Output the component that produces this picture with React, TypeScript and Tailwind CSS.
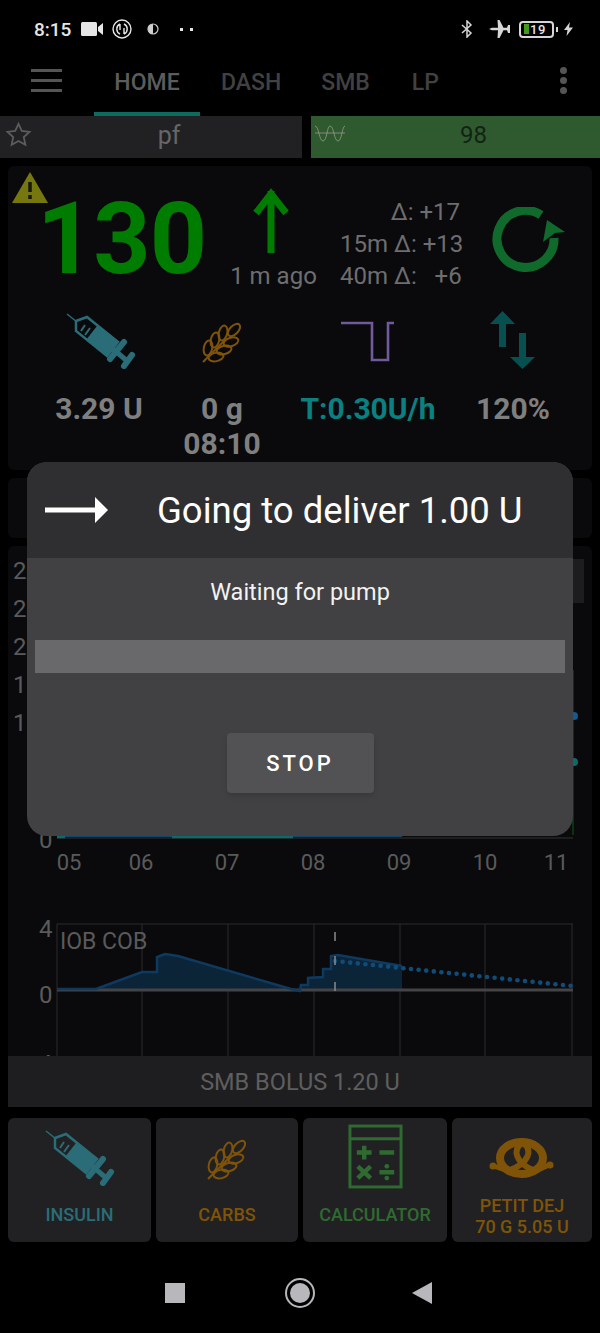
const ink = {
  teal: "#2a6d78",
  carb: "#805408",
  green: "#2f6b30",
};

const iobLine =
  "57,989 96,989 142,972 157,972 157,957 165,954 178,956 291,989 300,991 301,985 308,985 308,978 323,977 323,969 331,969 331,956 338,955 402,966";
const iobArea = `57,990 ${iobLine} 402,990`;
const hours = [
  ["05", 69],
  ["06", 141],
  ["07", 227],
  ["08", 313],
  ["09", 399],
  ["10", 485],
  ["11", 556],
] as const;
const axis = [
  ["280", 579],
  ["240", 617],
  ["200", 655],
  ["160", 693],
  ["120", 731],
] as const;
const dots = Array.from({ length: 32 }, (_, i) => ({
  x: 335 + i * 7.6,
  y: 961 + i * 0.8,
}));

function Syringe({ className }: { className: string }) {
  return (
    <svg viewBox="66 313 70 57" className={className}>
      <path d="M67 315 L77 323" stroke={ink.teal} strokeWidth="1.5" />
      <path d="M76 322 L87 318 L118 343 L107 357 L76 332 Z" fill="none" stroke={ink.teal} strokeWidth="2.5" />
      <path d="M97 327 L118 343 L107 357 L86 341 Z" fill={ink.teal} />
      <path d="M85 326 L81 332 M90 329 L85 336 M95 333 L90 339" stroke={ink.teal} strokeWidth="2" />
      <path d="M124 343 L110 360" stroke={ink.teal} strokeWidth="6" strokeLinecap="round" />
      <path d="M113 350 L126 361" stroke={ink.teal} strokeWidth="5" />
      <path d="M132 356 L124 367" stroke={ink.teal} strokeWidth="6" strokeLinecap="round" />
    </svg>
  );
}

function Wheat({ className }: { className: string }) {
  const leaves = [
    [209, 349, 12],
    [216, 341, 12],
    [224, 334, 14],
    [235, 331, 45],
    [232, 343, 72],
    [225, 351, 76],
    [217, 358, 78],
  ];
  return (
    <svg viewBox="202 323 42 42" className={className}>
      <path d="M204 363 L226 341" stroke={ink.carb} strokeWidth="2" />
      {leaves.map(([x, y, r]) => (
        <ellipse
          key={`${x}-${y}`}
          cx={x}
          cy={y}
          rx="4.2"
          ry="7.6"
          fill="none"
          stroke={ink.carb}
          strokeWidth="2"
          transform={`rotate(${r} ${x} ${y})`}
        />
      ))}
    </svg>
  );
}

function Calculator() {
  return (
    <svg viewBox="0 0 56 66" className="w-[55px] h-[65px] -mt-[7px]">
      <g stroke={ink.green} fill="none">
        <rect x="2" y="2" width="52" height="62" strokeWidth="3" />
        <path d="M2 15 H54" strokeWidth="3" />
        <path d="M9 29 H24 M16.5 22 V36 M32 29 H47 M10 43 L23 55 M23 43 L10 55 M32 49 H47" strokeWidth="4.5" />
      </g>
      <circle cx="39.5" cy="43" r="2.4" fill={ink.green} />
      <circle cx="39.5" cy="55" r="2.4" fill={ink.green} />
    </svg>
  );
}

function Pretzel() {
  return (
    <svg viewBox="490 1136 66 44" className="w-[66px] h-[44px] -mt-[4px]">
      <g fill="none" stroke={ink.carb}>
        <ellipse cx="522.5" cy="1158" rx="21.5" ry="16" strokeWidth="8" />
        <path d="M523 1143 C513 1150 517 1163 534 1170" strokeWidth="6" />
        <path d="M524 1143 C534 1150 530 1163 511 1170" strokeWidth="6" />
        <path d="M495 1166 L506 1170 M550 1165 L539 1170" strokeWidth="5" />
      </g>
      <circle cx="494" cy="1166" r="3.5" fill={ink.carb} />
      <circle cx="551" cy="1165" r="3.5" fill={ink.carb} />
    </svg>
  );
}

function StatusBar() {
  return (
    <div className="h-[58px] flex items-center pl-[34px] pr-[27px] text-[#e6e6e6]">
      <span className="w-[38px] text-[19px] font-medium leading-none">8:15</span>
      <svg viewBox="0 0 22 14" className="ml-[9px] w-[22px] h-[14px]" fill="#e6e6e6">
        <rect width="16" height="14" rx="1.5" />
        <path d="M17 5 L22 1 V13 L17 9 Z" />
      </svg>
      <svg viewBox="0 0 20 20" className="ml-[9px] w-[20px] h-[20px]" fill="none" stroke="#e6e6e6">
        <circle cx="10" cy="10" r="9" strokeWidth="1.4" />
        <path d="M8 5 A5.5 5.5 0 0 0 8 15 M12 5 A5.5 5.5 0 0 1 12 15 M8 5 V11 M12 9 V15" strokeWidth="1.4" />
      </svg>
      <svg viewBox="0 0 12 12" className="ml-[15px] w-[12px] h-[12px]">
        <circle cx="6" cy="6" r="5" fill="none" stroke="#cfcfcf" strokeWidth="1.2" />
        <path d="M6 1 A5 5 0 0 0 6 11 Z" fill="#cfcfcf" />
      </svg>
      <div className="ml-[21px] flex gap-[7px]">
        <span className="size-[3px] bg-[#e6e6e6]" />
        <span className="size-[3px] bg-[#e6e6e6]" />
      </div>
      <svg viewBox="0 0 12 18" className="ml-auto w-[12px] h-[18px]" fill="none" stroke="#d6d6d6" strokeWidth="1.5">
        <path d="M1 5 L10 13 L6 17 V1 L10 5 L1 13" />
      </svg>
      <svg viewBox="0 0 21 18" className="ml-[16px] w-[21px] h-[18px]" fill="#d6d6d6">
        <path d="M0 9 L3 7.8 H9 L8.5 0 H10.5 L14.5 7.8 H18 L19 5 H21 V13 H19 L18 10.2 H14.5 L10.5 18 H8.5 L9 10.2 H3 Z" />
      </svg>
      <div className="ml-[9px] w-[35px] h-[17px] border-2 border-[#d6d6d6] rounded-[4px] flex items-center pl-[3px]">
        <span className="w-[5px] h-[10px] bg-[#3f9a1e]" />
        <span className="ml-[1px] text-[13px] leading-none font-medium tracking-[0.5px]">19</span>
      </div>
      <span className="ml-[2px] w-[2px] h-[5px] bg-[#d6d6d6]" />
      <svg viewBox="0 0 9 14" className="ml-[6px] w-[9px] h-[14px]" fill="#d6d6d6">
        <path d="M6 0 L0 8 H3.5 L2.5 14 L9 5.5 H5 Z" />
      </svg>
    </div>
  );
}

function Toolbar() {
  return (
    <div className="h-[58px] flex items-start text-[23px] font-medium leading-none">
      <div className="ml-[31px] mt-[11px] w-[31px] flex flex-col gap-[7px]">
        <span className="h-[3px] bg-[#555]" />
        <span className="h-[3px] bg-[#555]" />
        <span className="h-[3px] bg-[#555]" />
      </div>
      <div className="ml-[32px] w-[106px] h-[58px] border-b-4 border-[#0e6b60] flex justify-center pt-[13px] text-[#5c5c5c]">
        HOME
      </div>
      <span className="ml-[21px] pt-[13px] text-[#414142]">DASH</span>
      <span className="ml-[40px] pt-[13px] text-[#414142]">SMB</span>
      <span className="ml-[42px] pt-[13px] text-[#414142]">LP</span>
      <div className="ml-auto mr-[33px] mt-[9px] flex flex-col gap-[3px]">
        <span className="size-[7px] rounded-full bg-[#555]" />
        <span className="size-[7px] rounded-full bg-[#555]" />
        <span className="size-[7px] rounded-full bg-[#555]" />
      </div>
    </div>
  );
}

function ProfileRow() {
  return (
    <div className="h-[42px] flex text-[24px] leading-none">
      <div className="w-[302px] bg-[#212124] flex items-center relative justify-center pl-[36px] pb-[4px] text-[#666] text-[25px]">
        <svg viewBox="0 0 24 24" className="absolute left-[5px] top-[5px] w-[27px] h-[27px]" fill="none" stroke="#5c5c5c" strokeWidth="1.6">
          <path d="M12 2.5 L14.9 8.8 L21.8 9.6 L16.7 14.3 L18.1 21.1 L12 17.7 L5.9 21.1 L7.3 14.3 L2.2 9.6 L9.1 8.8 Z" />
        </svg>
        pf
      </div>
      <div className="ml-[9px] flex-1 bg-[#2f5a2f] flex items-center relative justify-center pl-[36px] pb-[4px] text-[#122312]">
        <svg viewBox="0 0 32 20" className="absolute left-[3px] top-[8px] w-[32px] h-[20px]" fill="none" strokeWidth="0.8">
          <path d="M1 2 C5 2 5 17 9 17 C13 17 13 2 16 2 C20 2 20 17 24 17 C28 17 28 2 31 2" stroke="#8da07f" />
          <path d="M1 9 H31" stroke="#a78a9a" />
        </svg>
        98
      </div>
    </div>
  );
}

function Overview() {
  return (
    <div className="mx-[8px] mt-[8px] h-[304px] rounded-[6px] bg-[#0a0a0d] relative">
      <svg viewBox="0 0 36 31" className="absolute left-[4px] top-[6px] w-[36px] h-[31px]">
        <path d="M18 0 L36 31 H0 Z" fill="#77770f" />
        <path d="M18 10 V20 M18 23 V27" stroke="#17170a" strokeWidth="3.5" />
      </svg>
      <div className="flex items-start pl-[29px]">
        <span className="w-[165px] mt-[23px] text-[100px] leading-[100px] font-bold text-[#007c00] tracking-[-1px]">130</span>
        <div className="w-[138px] flex flex-col items-center pt-[21px]">
          <svg viewBox="0 0 36 66" className="w-[36px] h-[66px]" fill="none" stroke="#007c00" strokeWidth="7">
            <path d="M18 66 V4 M3 26 L18 7 L33 26" />
          </svg>
          <span className="mt-[6px] pl-[5px] text-[24px] leading-[34px] text-[#6e6e6e]">1 m ago</span>
        </div>
        <div className="w-[120px] pt-[30px] text-right text-[24px] leading-[32px] text-[#6e6e6e] whitespace-pre">
          <div>Δ: +17</div>
          <div>15m Δ: +13</div>
          <div>40m Δ:   +6</div>
        </div>
        <svg viewBox="490 207 78 70" className="ml-[30px] mt-[41px] w-[78px] h-[70px]" fill="none">
          <path d="M541 215 A28.5 28.5 0 1 0 554 238" stroke="#0f6a2c" strokeWidth="9" />
          <path d="M547 220 L565 232 L555 233 L543 242 Z" fill="#0f6a2c" />
        </svg>
      </div>
      <div className="flex pl-[8px] mt-[19px] text-[30px] leading-[35px] font-bold text-[#7f7f7f] text-center">
        <div className="w-[166px] flex flex-col items-center">
          <div className="h-[79px] pl-[3px] flex items-start justify-center">
            <Syringe className="w-[70px] h-[57px]" />
          </div>
          <span>3.29 U</span>
        </div>
        <div className="w-[80px] flex flex-col items-center">
          <div className="h-[79px] pt-[10px]">
            <Wheat className="w-[42px] h-[42px]" />
          </div>
          <span>0 g</span>
          <span>08:10</span>
        </div>
        <div className="w-[212px] flex flex-col items-center">
          <div className="h-[79px] pt-[8px]">
            <svg viewBox="338 320 56 44" className="w-[56px] h-[44px]" fill="none">
              <path d="M339 323 H370 V360 H386 V323 H392" stroke="#6f5a9a" strokeWidth="2.6" />
            </svg>
          </div>
          <span className="text-[#0a8080] whitespace-nowrap">T:0.30U/h</span>
        </div>
        <div className="w-[78px] flex flex-col items-center">
          <div className="h-[79px]">
            <svg viewBox="489 311 48 60" className="w-[48px] h-[60px] -mt-[2px]" fill="#07504f">
              <path d="M502.5 312 L515 325 H506 V348 H499 V325 H490 Z" />
              <path d="M522.5 370 L510 358 H519 V334 H526 V358 H535 Z" />
            </svg>
          </div>
          <span>120%</span>
        </div>
      </div>
    </div>
  );
}

function Charts() {
  return (
    <div className="mx-[8px] mt-[8px] h-[510px] rounded-t-[6px] bg-[#0a0a0d] overflow-hidden">
      <svg viewBox="8 546 584 510" className="w-[584px] h-[510px]" fontFamily="Roboto, sans-serif" fontSize="22" fill="#5a5a5a">
        <rect x="500" y="559" width="84" height="44" fill="#1d1d20" />
        {axis.map(([label, y]) => (
          <text key={y} x="13" y={y} fontSize="24">
            {label}
          </text>
        ))}
        <text x="39" y="848" fontSize="24">0</text>
        <path d="M573 670 V835" stroke="#0d5a1e" strokeWidth="1" />
        <path d="M57 838 H573" stroke="#333" />
        <path d="M57 836 H402" stroke="#12466e" strokeWidth="2" />
        <path d="M57 836.5 H65 M172 836.5 H293" stroke="#0c6a6a" strokeWidth="3.5" />
        <circle cx="574" cy="716" r="4" fill="#125a90" />
        <circle cx="574" cy="762" r="4" fill="#0c6a6a" />
        {hours.map(([label, x]) => (
          <text key={label} x={x} y="870" textAnchor="middle">
            {label}
          </text>
        ))}

        <g stroke="#2a2a2d" strokeWidth="1">
          <path d="M57 924 H573 M57 924 V1056" />
          {[142, 228, 314, 400, 485, 572].map((x) => (
            <path key={x} d={`M${x} 924 V1056`} />
          ))}
        </g>
        <polygon points={iobArea} fill="#0b2438" />
        <path d="M57 990 H573" stroke="#444446" strokeWidth="3" />
        <polyline points={iobLine} fill="none" stroke="#0f3a60" strokeWidth="2.5" />
        {dots.map((d) => (
          <circle key={d.x} cx={d.x} cy={d.y} r="2.3" fill="#0f4d78" />
        ))}
        <path d="M335 932 V941 M335 956 V965 M335 982 V991" stroke="#8a8a8a" strokeWidth="1.5" />
        <text x="60" y="949" fontSize="23">IOB COB</text>
        <text x="39" y="937" fontSize="24">4</text>
        <text x="39" y="1003" fontSize="24">0</text>
        <text x="39" y="1072" fontSize="24">4</text>
      </svg>
    </div>
  );
}

function ActionButton({
  label,
  color,
  icon,
  lines,
  width,
}: {
  label: string;
  color: string;
  icon: React.ReactNode;
  lines?: string;
  width: string;
}) {
  return (
    <div
      className={`${width} h-[124px] rounded-[6px] bg-[#212123] flex flex-col items-center text-[18px] leading-[21px] font-medium text-center`}
      style={{ color }}
    >
      <div className="h-[84px] flex items-center justify-center">{icon}</div>
      <span className={lines ? "-mt-[7px]" : "mt-[2px]"}>{label}</span>
      {lines && <span>{lines}</span>}
    </div>
  );
}

export default function App() {
  return (
    <div className="relative w-[600px] h-[1333px] bg-black overflow-hidden font-['Roboto',sans-serif]">
      <StatusBar />
      <Toolbar />
      <ProfileRow />
      <Overview />
      <div className="mx-[8px] mt-[8px] h-[60px] rounded-[6px] bg-[#0a0a0d]" />
      <Charts />
      <div className="mx-[8px] h-[51px] pt-[3px] bg-[#1e1e20] flex items-center justify-center text-[23.5px] text-[#5e5e5e]">
        SMB BOLUS 1.20 U
      </div>
      <div className="mx-[8px] mt-[11px] flex gap-[5px]">
        <ActionButton
          width="w-[143px]"
          label="INSULIN"
          color={ink.teal}
          icon={<Syringe className="w-[70px] h-[57px] -mt-[6px]" />}
        />
        <ActionButton width="w-[142px]" label="CARBS" color={ink.carb} icon={<Wheat className="w-[42px] h-[42px]" />} />
        <ActionButton width="w-[144px]" label="CALCULATOR" color={ink.green} icon={<Calculator />} />
        <ActionButton width="w-[140px]" label="PETIT DEJ" lines="70 G 5.05 U" color={ink.carb} icon={<Pretzel />} />
      </div>
      <div className="mt-[36px] pr-[4px] flex items-center justify-center">
        <span className="size-[20px] bg-[#b8b8bc]" />
        <span className="ml-[100px] size-[30px] rounded-full border-2 border-[#b8b8bc] p-[3px] flex">
          <span className="flex-1 rounded-full bg-[#b8b8bc]" />
        </span>
        <svg viewBox="0 0 20 22" className="ml-[97px] w-[20px] h-[22px]" fill="#b8b8bc">
          <path d="M0 11 L20 0 V22 Z" />
        </svg>
      </div>

      <div className="absolute left-[27px] top-[462px] w-[546px] h-[374px] rounded-[20px] overflow-hidden bg-[#414042] text-white">
        <div className="h-[96px] bg-[#2f2f32] flex items-center pl-[18px]">
          <svg viewBox="0 0 63 26" className="w-[63px] h-[26px]" fill="#fff">
            <path d="M0 10.5 H50 V0 L63 13 L50 26 V15.5 H0 Z" />
          </svg>
          <span className="ml-[49px] pt-[3px] text-[36.5px] leading-none whitespace-nowrap">Going to deliver 1.00 U</span>
        </div>
        <div className="flex flex-col items-center">
          <span className="mt-[20px] text-[23.5px] leading-[28px] text-[#f2f2f2]">Waiting for pump</span>
          <div className="mt-[34px] w-[530px] h-[33px] bg-[#69686a]" />
          <div className="mt-[60px] pt-[1px] w-[147px] h-[60px] rounded-[4px] bg-[#525153] shadow-md flex items-center justify-center text-[22px] font-medium tracking-[3px]">
            STOP
          </div>
        </div>
      </div>
    </div>
  );
}
